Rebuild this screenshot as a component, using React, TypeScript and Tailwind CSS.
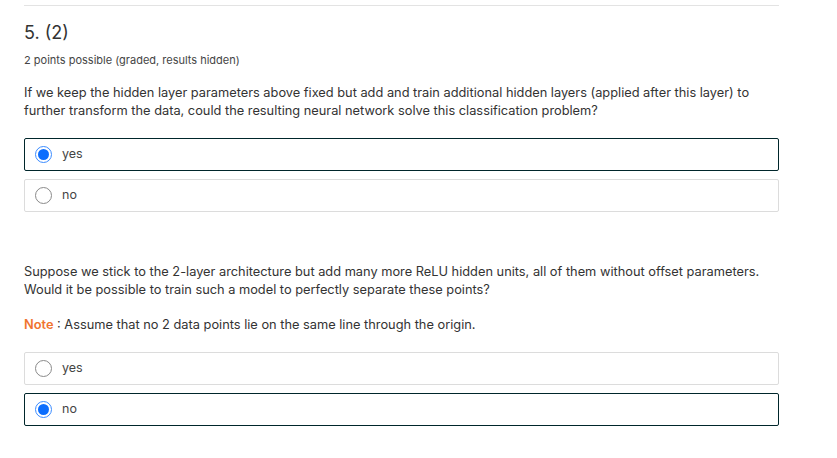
import React from "react";

function Radio({ checked }: { checked: boolean }) {
  return checked ? (
    <span className="flex h-[17px] w-[17px] items-center justify-center rounded-full border border-[#3b8cff] bg-white">
      <span className="h-[11px] w-[11px] rounded-full bg-[#0d6efd]" />
    </span>
  ) : (
    <span className="h-[17px] w-[17px] rounded-full border border-[#8a8a8a] bg-white" />
  );
}

function Option({ label, checked }: { label: string; checked: boolean }) {
  return (
    <div
      className={
        "flex h-[33px] items-center gap-[10px] rounded-[2px] border pl-[10px] " +
        (checked ? "border-[#00262b]" : "border-[#dcdcdc]")
      }
    >
      <Radio checked={checked} />
      <span className="text-[12.5px] text-[#454545]">{label}</span>
    </div>
  );
}

export default function App() {
  return (
    <div className="min-h-[458px] bg-white font-['Inter','Noto_Sans',sans-serif] text-[#454545]">
      <div className="w-[755px] pl-[24px] pt-[5px] box-content">
        <div className="border-t border-[#e3e3e3]" />
        <h2 className="mt-[16px] text-[18px] leading-[22px] text-[#333]">5. (2)</h2>
        <div className="mt-[9px] text-[11px] leading-[14px] text-[#454545]">
          2 points possible (graded, results hidden)
        </div>
        <p className="mt-[17px] text-[12.8px] leading-[17.5px] text-[#333]">
          If we keep the hidden layer parameters above fixed but add and train additional hidden layers (applied after this layer) to
          further transform the data, could the resulting neural network solve this classification problem?
        </p>
        <div className="mt-[19px] flex flex-col gap-[8px]">
          <Option label="yes" checked={true} />
          <Option label="no" checked={false} />
        </div>
        <p className="mt-[51px] text-[12.8px] leading-[17.5px] text-[#333]">
          Suppose we stick to the 2-layer architecture but add many more ReLU hidden units, all of them without offset parameters.
          Would it be possible to train such a model to perfectly separate these points?
        </p>
        <p className="mt-[18px] text-[12.8px] leading-[17.5px] text-[#333]">
          <span className="font-semibold text-[#f0742f]">Note</span> : Assume that no 2 data points lie on the same line through the origin.
        </p>
        <div className="mt-[18px] flex flex-col gap-[8px]">
          <Option label="yes" checked={false} />
          <Option label="no" checked={true} />
        </div>
      </div>
    </div>
  );
}
